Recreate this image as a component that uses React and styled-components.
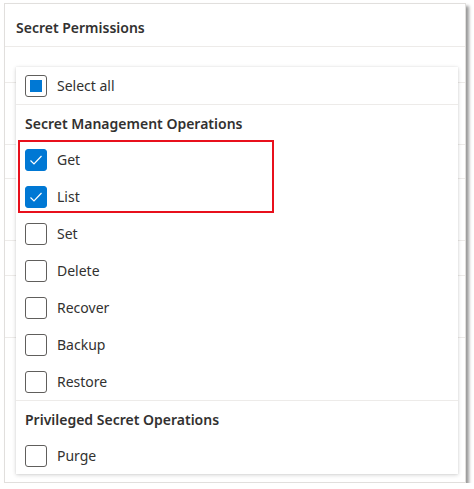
import React from "react";
import styled, { createGlobalStyle } from "styled-components";

const GlobalStyle = createGlobalStyle`
  body {
    margin: 0;
    background: #ffffff;
    font-family: "Noto Sans", "Open Sans", sans-serif;
    color: #323130;
  }
`;

const Frame = styled.div`
  position: relative;
  margin: 3px 0 0 4px;
  width: 460px;
  height: 478px;
  border: 1px solid #e1dfdd;
  background: #ffffff;
  box-shadow: 3px 3px 3px rgba(0, 0, 0, 0.4);
`;

const Header = styled.div`
  height: 38px;
  padding-top: 4px;
  display: flex;
  align-items: center;
  padding-left: 11px;
  font-size: 14px;
  font-weight: 600;
  border-bottom: 1px solid #edebe9;
`;

const BgRow = styled.div`
  height: ${(p) => p.h}px;
  border-bottom: 1px solid #edebe9;
`;

const Dropdown = styled.div`
  position: absolute;
  left: 11px;
  top: 63px;
  width: 442px;
  background: #ffffff;
  box-shadow: 0 1px 4px rgba(0, 0, 0, 0.18), 0 0 1px rgba(0, 0, 0, 0.1);
`;

const Option = styled.div`
  height: 37px;
  display: flex;
  align-items: center;
  gap: 10px;
  padding-left: 9px;
  font-size: 14px;
  color: #323130;
`;

const Divider = styled.div`
  height: 1px;
  background: #edebe9;
`;

const Heading = styled.div`
  height: 36px;
  display: flex;
  align-items: center;
  padding-left: 9px;
  font-size: 14px;
  font-weight: 600;
  color: #323130;
`;

const Box = styled.span`
  box-sizing: border-box;
  width: 22px;
  height: 22px;
  border-radius: 3px;
  border: 1px solid ${(p) => (p.checked ? "#0078d4" : "#605e5c")};
  background: ${(p) => (p.checked ? "#0078d4" : "#ffffff")};
  display: flex;
  align-items: center;
  justify-content: center;
  flex-shrink: 0;
`;

const Partial = styled.span`
  width: 12px;
  height: 12px;
  background: #0078d4;
`;

const Highlight = styled.div`
  position: absolute;
  left: 2px;
  top: 73px;
  width: 256px;
  height: 73px;
  box-sizing: border-box;
  border: 2px solid #e8101c;
  pointer-events: none;
`;

const Check = () => (
  <svg width="16" height="16" viewBox="0 0 16 16">
    <polyline
      points="2.5,8.5 6,12 13.5,4"
      fill="none"
      stroke="#ffffff"
      strokeWidth="1.2"
    />
  </svg>
);

function Item({ label, checked }) {
  return (
    <Option>
      <Box checked={checked}>{checked && <Check />}</Box>
      {label}
    </Option>
  );
}

const management = [
  { label: "Get", checked: true },
  { label: "List", checked: true },
  { label: "Set" },
  { label: "Delete" },
  { label: "Recover" },
  { label: "Backup" },
  { label: "Restore" },
];

export default function App() {
  return (
    <>
      <GlobalStyle />
      <Frame>
        <Header>Secret Permissions</Header>
        <BgRow h={35} />
        <BgRow h={61} />
        <BgRow h={33} />
        <BgRow h={61} />
        <BgRow h={34} />
        <BgRow h={61} />
        <Dropdown>
          <Option>
            <Box>
              <Partial />
            </Box>
            Select all
          </Option>
          <Divider />
          <Heading>Secret Management Operations</Heading>
          {management.map((m) => (
            <Item key={m.label} label={m.label} checked={m.checked} />
          ))}
          <Divider />
          <Heading>Privileged Secret Operations</Heading>
          <Item label="Purge" />
          <Highlight />
        </Dropdown>
      </Frame>
    </>
  );
}
